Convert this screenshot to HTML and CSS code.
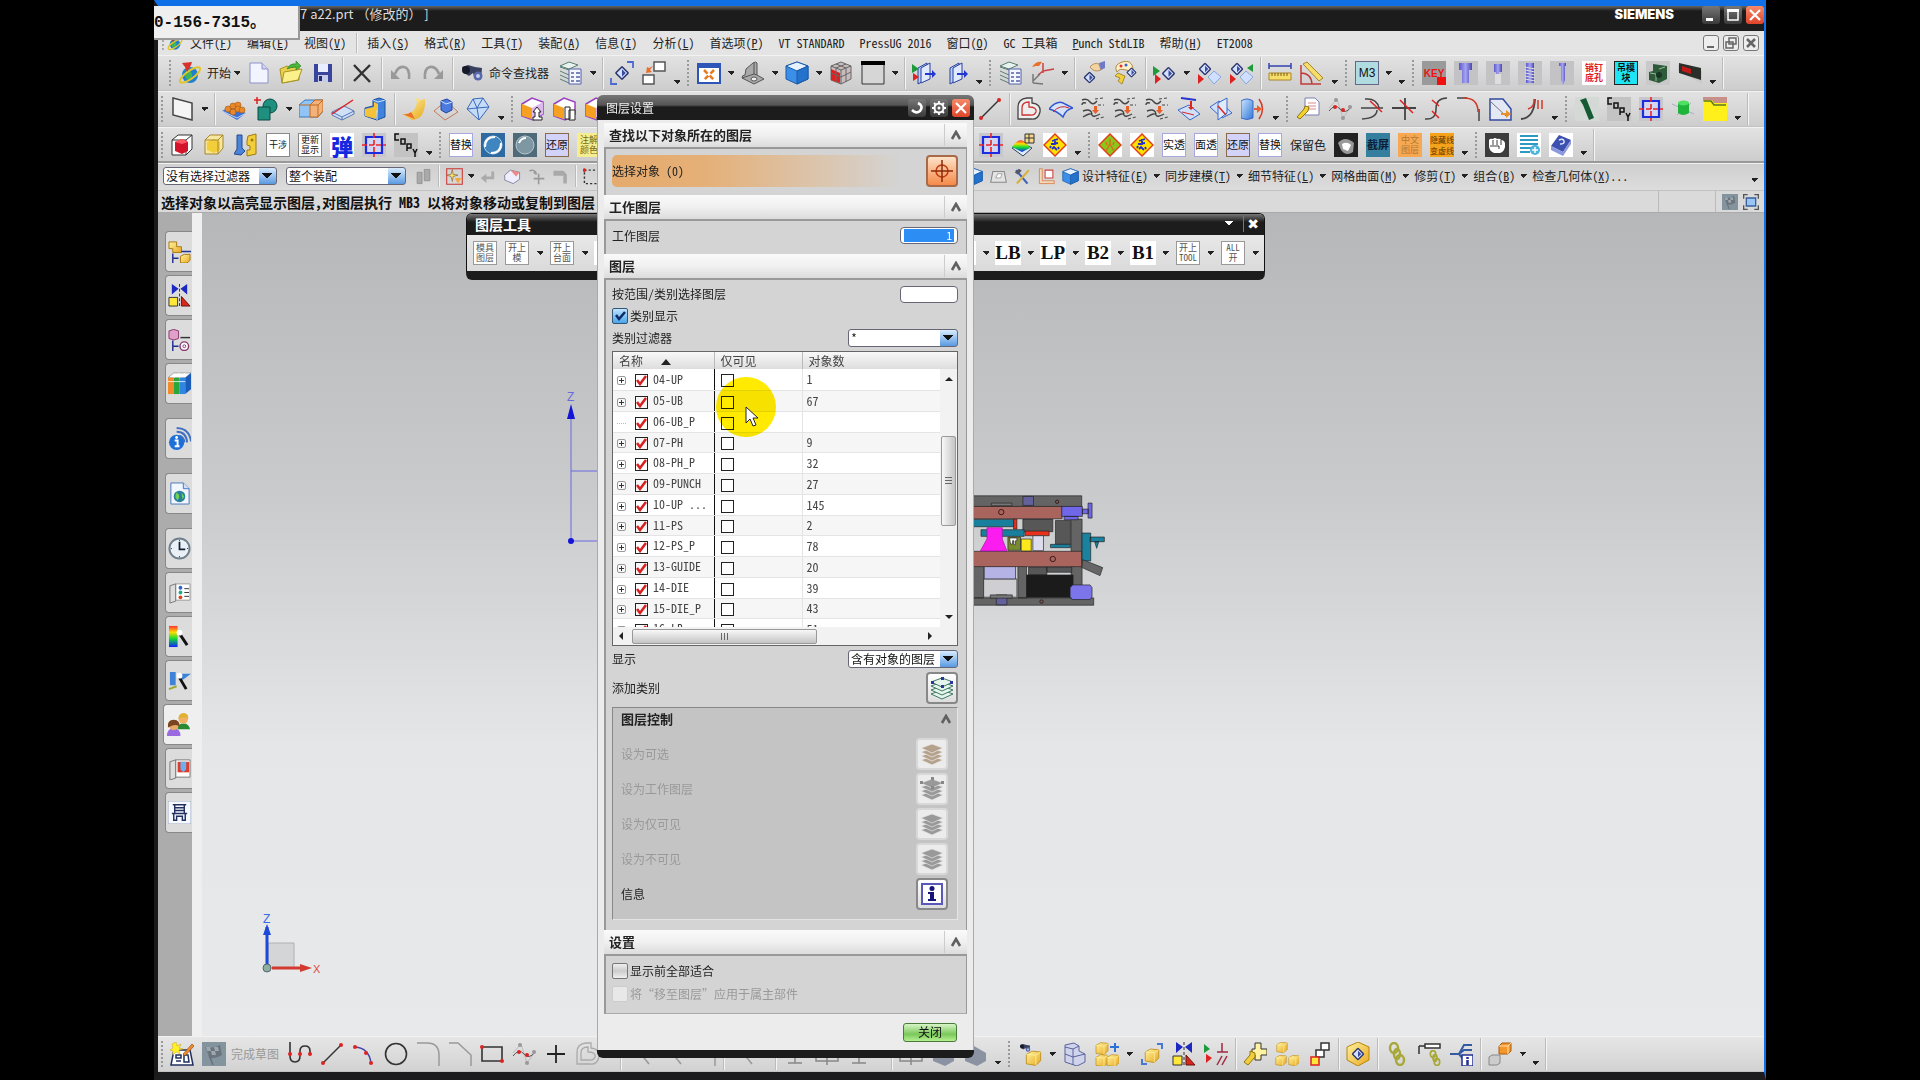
FILE: index.html
```html
<!DOCTYPE html>
<html lang="zh-CN">
<head>
    <meta charset="UTF-8">
    <meta name="viewport" content="width=device-width, initial-scale=1.0">
    <title>图层设置</title>
    <link rel="stylesheet" href="styles.css">
</head>
<body>
    <!-- Icon library -->
    <svg class="library" aria-hidden="true">
        <defs>
            <linearGradient id="g-blue" x1="0" y1="0" x2="1" y2="1"><stop offset="0" stop-color="#cfe6ff"/><stop offset="1" stop-color="#2f77d8"/></linearGradient>
            <linearGradient id="g-gold" x1="0" y1="0" x2="1" y2="1"><stop offset="0" stop-color="#fff3a0"/><stop offset="1" stop-color="#e8a820"/></linearGradient>
            <linearGradient id="g-rain" x1="0" y1="0" x2="0" y2="1"><stop offset="0" stop-color="#f33"/><stop offset=".3" stop-color="#fd0"/><stop offset=".6" stop-color="#1d3"/><stop offset="1" stop-color="#12f"/></linearGradient>
            <linearGradient id="g-violet" x1="0" y1="0" x2="1" y2="0"><stop offset="0" stop-color="#5a58c8"/><stop offset=".5" stop-color="#a5a3f2"/><stop offset="1" stop-color="#4a48b0"/></linearGradient>
        </defs>
        <symbol id="nx" viewBox="0 0 24 24"><circle cx="12" cy="14" r="8" fill="#1f7fd0"/><path d="M8 10q5-1 6 3t-3 7q-6-3-3-10z" fill="#3fb55a"/><ellipse cx="12" cy="14" rx="12" ry="4" fill="none" stroke="#e3c52b" stroke-width="2" transform="rotate(-35 12 14)"/><path d="M4 2l10-1-1 3-4 7-2-5z" fill="#d8322a"/></symbol>
        <symbol id="new" viewBox="0 0 24 24"><path d="M3 2h12l6 6v14H3z" fill="#f2f4ff" stroke="#8f92c8"/><path d="M15 2v6h6" fill="#cfd2f0" stroke="#8f92c8"/></symbol>
        <symbol id="open" viewBox="0 0 24 24"><path d="M1 8l7-3 3 2 9-2v14L3 22z" fill="#e9d24a" stroke="#a8922a"/><path d="M5 11l18-3-4 11L3 22z" fill="#fbf08a" stroke="#a8922a"/><path d="M8 8q3-6 9-5V0l5 5-5 4V6q-5 0-9 2z" fill="#4bb53c" stroke="#2a7a22" stroke-width=".6"/></symbol>
        <symbol id="save" viewBox="0 0 24 24"><path d="M3 3h18v18H3z" fill="#39449c"/><path d="M7 3h10v8H7z" fill="#e8eeff"/><path d="M7 14h10v7H7z" fill="#c6cbe8"/><path d="M8 15h3v5H8z" fill="#222c70"/></symbol>
        <symbol id="del" viewBox="0 0 24 24"><path d="M4 4l16 17M20 4L4 20" stroke="#333" stroke-width="2.4"/></symbol>
        <symbol id="undo" viewBox="0 0 24 24"><path d="M6 13q3-8 9-7t5 12" fill="none" stroke="#999" stroke-width="2.6"/><path d="M2 9v9h9z" fill="#999"/></symbol>
        <symbol id="redo" viewBox="0 0 24 24"><path d="M18 13q-3-8-9-7T4 18" fill="none" stroke="#999" stroke-width="2.6"/><path d="M22 9v9h-9z" fill="#999"/></symbol>
        <symbol id="binoc" viewBox="0 0 24 24"><path d="M2 6l6-2 7 2 7 1-1 11h-6l-2-6-4 3-5-3z" fill="#3a4160"/><circle cx="6" cy="9" r="4" fill="#161a28"/><circle cx="18" cy="15" r="4.500" fill="#5968a8"/><circle cx="18" cy="15" r="2" fill="#c4cdf0"/></symbol>
        <symbol id="list" viewBox="0 0 24 24"><path d="M1 5l9-4 9 3-9 4zM1 10l9 4M1 14l9 4M1 18l9 4M1 6l9 3" fill="#e8f2ee" stroke="#5b7f74"/><path d="M10 8h12v15H10z" fill="#f4f6ff" stroke="#5560a8"/><path d="M12 12h3M17 12h4M12 16h3M17 16h4M12 20h3M17 20h4" stroke="#5560a8" stroke-width="1.500"/></symbol>
        <symbol id="diamond" viewBox="0 0 24 24"><rect x="5" y="5" width="14" height="14" rx="2" transform="rotate(45 12 12)" fill="#27346e"/><path d="M12 5l7 7-7 7-7-7z" fill="#d7e0ff"/><path d="M12 7l5 5-5 5z" fill="#3a4ea0"/></symbol>
        <symbol id="swap" viewBox="0 0 24 24"><use href="#diamond" x="3" y="3" width="18" height="18"/><path d="M17 1h6v6M14 1M1 17v6h6" fill="none" stroke="#4a6ad0" stroke-width="1.800"/></symbol>
        <symbol id="boxes" viewBox="0 0 24 24"><path d="M12 1h11v9H12zM1 14h11v9H1z" fill="#fff" stroke="#555" stroke-width="1.500"/><path d="M4 12l1-6 2 1 4-2-3 4 2 2z" fill="#e8702a"/></symbol>
        <symbol id="fit" viewBox="0 0 24 24"><path d="M1 3h22v19H1z" fill="#fff" stroke="#2d56b8" stroke-width="2"/><path d="M1 3h22v4H1z" fill="#2d56b8"/><path d="M7 9l10 10M17 9L7 19" stroke="#e77a20" stroke-width="2.500" stroke-dasharray="5 3"/></symbol>
        <symbol id="bracket" viewBox="0 0 24 24"><path d="M12 2q3-2 4 0v12l7 4-10 5L1 17q0-3 3-3l1-6z" fill="#a9a9a9" stroke="#555"/><path d="M1 17l12-4 3 1M13 13V2" fill="none" stroke="#555"/><ellipse cx="13" cy="18" rx="3" ry="2" fill="#eee" stroke="#555"/></symbol>
        <symbol id="cube" viewBox="0 0 24 24"><path d="M12 1l11 4v13l-11 5L1 18V5z" fill="#3b8fe8" stroke="#1b5aa8"/><path d="M12 1l11 4-11 5L1 5z" fill="#e6f3ff" stroke="#1b5aa8"/><path d="M12 10l11-5v13l-11 5z" fill="#2472cc" stroke="#1b5aa8"/></symbol>
        <symbol id="redcube" viewBox="0 0 24 24"><path d="M12 1l10 4v13l-10 5-10-4V5z" fill="#c9bcbc" stroke="#666"/><path d="M2 8l9 4v10L2 19z" fill="#e02020"/><path d="M2 5l10 4 10-4M12 9v14M7 3l10 4v14M17 3L7 7v14M2 12l10 4 10-5" fill="none" stroke="#666"/></symbol>
        <symbol id="rect" viewBox="0 0 24 24"><path d="M1 1h22v22H1z" fill="#d6d6d6" stroke="#333"/><path d="M0 0h24v4H0z" fill="#000"/></symbol>
        <symbol id="door" viewBox="0 0 24 24"><path d="M6 7l9-5v16l-9 5z" fill="#b8d0ff" stroke="#2b3f98"/><path d="M9 7l9-5v16l-9 4z" fill="#e0eaff" stroke="#2b3f98"/><path d="M13 12h7V9l4 4-4 4v-3h-7z" fill="#2038d0"/></symbol>
        <symbol id="door2" viewBox="0 0 24 24"><use href="#door"/><path d="M0 3l7 5-7 4z" fill="#1e9a3a"/><path d="M1 12l6 4-6 4z" fill="#d22"/></symbol>
        <symbol id="axes" viewBox="0 0 24 24"><path d="M12 12V2M12 10l11-2M12 10l-5 4" stroke="#c44" stroke-width="1.500"/><path d="M2 22V13M2 22l10 1M2 20l7-7" stroke="#777" fill="none" stroke-width="1.500"/><path d="M1 6q4-6 10-5L8 5H5z" fill="#e8702a"/></symbol>
        <symbol id="hand" viewBox="0 0 24 24"><use href="#diamond" x="0" y="9" width="15" height="15"/><path d="M8 6q4-5 9-3l2 6q-7 3-11-3z" fill="#f3d3a0" stroke="#a07040" stroke-width=".7"/><path d="M17 2l6-2v7l-4 2z" fill="#7078c8"/></symbol>
        <symbol id="palette" viewBox="0 0 24 24"><path d="M3 11Q-1 4 8 1t11 6q0 4-7 2t-9 2z" fill="#fff0c8" stroke="#b08a40"/><circle cx="7" cy="5" r="1.500" fill="#d33"/><circle cx="12" cy="4" r="1.500" fill="#36c"/><use href="#diamond" x="11" y="5" width="13" height="13"/><path d="M4 12l7 3-3 8-4-3 2-3-5-2z" fill="#f0d040" stroke="#907010" stroke-width=".7"/></symbol>
        <symbol id="cmp" viewBox="0 0 24 24"><path d="M0 5l7 5-7 5z" fill="#1e9a3a"/><path d="M2 13l6 5-6 5z" fill="#d22"/><use href="#diamond" x="7" y="4" width="17" height="17"/></symbol>
        <symbol id="cmp2" viewBox="0 0 24 24"><use href="#diamond" x="0" y="0" width="16" height="16"/><path d="M17 10l7 6-7 7-6-7z" fill="#cfdfff" stroke="#8aa8e0"/><path d="M1 13l6 5-6 5z" fill="#d22"/></symbol>
        <symbol id="cmp3" viewBox="0 0 24 24"><use href="#cmp2"/><path d="M24 3l-6 4 6 4z" fill="#1e9a3a"/></symbol>
        <symbol id="ruler" viewBox="0 0 24 24"><path d="M1 5h22M1 2v6M23 2v6" stroke="#3344b0" stroke-width="1.500"/><path d="M1 12h22v7H1z" fill="#f7de6a" stroke="#a8852a"/><path d="M4 12v3M7 12v3M10 12v3M13 12v3M16 12v3M19 12v3" stroke="#7a5d10"/></symbol>
        <symbol id="angle" viewBox="0 0 24 24"><path d="M1 4v19h20M1 12q10 0 11 11" fill="none" stroke="#c23a3a" stroke-width="1.500"/><path d="M3 3l4-2 16 16-4 3z" fill="#f7de6a" stroke="#a8852a"/></symbol>
        <symbol id="screw" viewBox="0 0 24 24"><path d="M0 0h24v24H0z" fill="#c3c3c6"/><path d="M5 2h13v7h-3v13H8V9H5z" fill="url(#g-violet)"/></symbol>
        <symbol id="screw2" viewBox="0 0 24 24"><path d="M0 0h24v24H0z" fill="#c3c3c6"/><path d="M8 3h8v8h-3v2h-3v-2H8z" fill="url(#g-violet)"/><path d="M9 13h6v10H9z" fill="#ddd"/></symbol>
        <symbol id="spring" viewBox="0 0 24 24"><path d="M0 0h24v24H0z" fill="#c3c3c6"/><path d="M8 2h8v20H8z" fill="url(#g-violet)"/><path d="M7 6l10 2M7 9l10 2M7 12l10 2M7 15l10 2M7 18l10 2" stroke="#ddd"/></symbol>
        <symbol id="pin" viewBox="0 0 24 24"><path d="M0 0h24v24H0z" fill="#c3c3c6"/><path d="M9 2h7v3h-1v14l-2 5-2-5V5H9z" fill="url(#g-violet)"/></symbol>
        <symbol id="gblock" viewBox="0 0 24 24"><path d="M0 0h24v24H0z" fill="#c9c9c9"/><path d="M7 3l14 2v13l-8 4-10-3v-8l4-1z" fill="#2f5a3a"/><path d="M4 12l6 1v7M13 8l6-2" stroke="#8fc09a" fill="none"/><circle cx="13" cy="14" r="3" fill="#143520"/></symbol>
        <symbol id="strip" viewBox="0 0 24 24"><path d="M0 4l24 6v13L0 10z" fill="#c9c9c9"/><path d="M1 2l22 5v12L1 12z" fill="#2a2f2a"/><path d="M4 5l9 3v5L4 10z" fill="#c21818"/></symbol>
        <symbol id="plane" viewBox="0 0 24 24"><path d="M3 1l19 5v17L3 18z" fill="#f4f4f4" stroke="#444" stroke-width="1.500"/></symbol>
        <symbol id="bumps" viewBox="0 0 24 24"><path d="M0 14l9-5 15 7-9 7z" fill="#3c6fd0"/><path d="M0 14l15 7 9-5" fill="none" stroke="#bcd3ff"/><g fill="#e8882a" stroke="#a85a10" stroke-width=".6"><circle cx="6" cy="12" r="3"/><circle cx="11" cy="9" r="3"/><circle cx="16" cy="8" r="3"/><circle cx="11" cy="15" r="3"/><circle cx="16" cy="12" r="3"/><circle cx="20" cy="13" r="3"/></g></symbol>
        <symbol id="unite" viewBox="0 0 24 24"><circle cx="16" cy="9" r="7" fill="#1f9080" stroke="#0d4a44"/><path d="M4 10h12v13H4z" fill="#1f9080" stroke="#0d4a44"/><path d="M3 0v7M0 3h7" stroke="#d22" stroke-width="1.500"/></symbol>
        <symbol id="block" viewBox="0 0 24 24"><path d="M0 8l6-5h18v11l-5 6H0z" fill="#8fc4f5" stroke="#3b78c0"/><path d="M11 8l5-5h8v11l-5 6h-8z" fill="#f2b27a" stroke="#c06a20"/><path d="M0 8h19v12M19 8l5-5" fill="none" stroke="#c06a20"/></symbol>
        <symbol id="slab" viewBox="0 0 24 24"><path d="M1 15l12-6 10 5v3l-12 6-10-5z" fill="#cfe0f8" stroke="#5577b0"/><path d="M1 15l10 5 12-6M11 20v3" fill="none" stroke="#5577b0"/><path d="M1 17L22 3" stroke="#d22" stroke-width="1.500"/></symbol>
        <symbol id="extr" viewBox="0 0 24 24"><path d="M10 3l6-2 6 2v17l-8 3-12-4v-8l8-2z" fill="#3f83dc" stroke="#1d4f9c"/><path d="M2 12l9-2V5l4 2v6l-2 9-11-3z" fill="#f5c23a"/><path d="M10 3l5 2 7-2M14 13v10" fill="none" stroke="#cfe3ff"/></symbol>
        <symbol id="sheet" viewBox="0 0 24 24"><path d="M0 17q14 1 15-13l8-2q1 20-13 21z" fill="url(#g-gold)"/><path d="M0 17q6 1 9-2l4 7z" fill="#e8702a"/><path d="M13 2l5-1-1 5z" fill="#f8e07a"/></symbol>
        <symbol id="pyramid" viewBox="0 0 24 24"><path d="M12 4l12 11-13 8L0 14z" fill="none" stroke="#c27a5a"/><path d="M7 4l6-2 5 3v8l-6 3-5-3z" fill="#4b7be0" stroke="#23469c"/><path d="M7 4l5 3 6-2" fill="none" stroke="#cfe0ff"/></symbol>
        <symbol id="gem" viewBox="0 0 24 24"><path d="M7 2l10-1 6 9-10 13L1 12z" fill="#c4dcfa" stroke="#3a68b8"/><path d="M7 2l4 9 6-10M1 12l10-1 12-1M11 11l2 12" fill="none" stroke="#3a68b8"/></symbol>
        <symbol id="pcube" viewBox="0 0 24 24"><path d="M1 7l10-6 11 4v12l-10 6-11-4z" fill="#fff" stroke="#9a3fc0" stroke-width="1.500"/><path d="M1 7l10 4v11L1 19z" fill="#f5a020"/><path d="M11 11l11-6v12l-11 6z" fill="#dcb8ee"/><path d="M16 10l4 5h-2v5h3v3H12v-3h2v-5h-2z" fill="#fff" stroke="#222"/></symbol>
        <symbol id="pcube2" viewBox="0 0 24 24"><path d="M1 7l10-6 11 4v12l-10 6-11-4z" fill="#fff" stroke="#9a3fc0" stroke-width="1.500"/><path d="M1 7l10 4v11L1 19z" fill="#f5a020"/><path d="M12 10h5v12h-5zM16 13h6v10h-6z" fill="#fff" stroke="#222"/></symbol>
        <symbol id="line" viewBox="0 0 24 24"><path d="M3 21L21 3" stroke="#333" stroke-width="1.500"/><circle cx="3" cy="21" r="2" fill="#d22"/><circle cx="21" cy="3" r="2" fill="#d22"/></symbol>
        <symbol id="offset" viewBox="0 0 24 24"><path d="M1 10q0-8 9-9h5v5q9 1 8 9-2 8-9 7H1z" fill="#eee" stroke="#444" stroke-width="1.300"/><path d="M5 11q0-6 7-6v5q8 0 7 5-2 4-6 3H5z" fill="none" stroke="#c33" stroke-width="1.300"/></symbol>
        <symbol id="surf" viewBox="0 0 24 24"><path d="M0 12q9-10 16-5l8 4q-7 1-10 9-6-6-14-8z" fill="#d3e3fa" stroke="#2f55d0" stroke-width="1.500"/><path d="M4 15q7-8 16-4" fill="none" stroke="#d22"/></symbol>
        <symbol id="bridge" viewBox="0 0 24 24"><path d="M1 3q5-2 8 2t7-1M1 8q0-3 4-2M2 20q8-5 9-2t8-1M2 14q8-3 9 3" fill="none" stroke="#444" stroke-width="1.400"/><path d="M14 2l8-1M17 8h6M15 22l8-2" stroke="#444" stroke-dasharray="3 2"/><path d="M13 9h3v4h2l-3.500 4-3.500-4h2z" fill="#e8602a"/></symbol>
        <symbol id="proj" viewBox="0 0 24 24"><path d="M1 13l11-5 11 9-10 6z" fill="#cfe0f8" stroke="#3a68c8"/><path d="M4 1l15 2" stroke="#2a35d0" stroke-width="2"/><path d="M5 15l12 3" stroke="#d22"/><path d="M13 4v6h-2l3 3 3-3h-2V4z" fill="#d22"/></symbol>
        <symbol id="isect" viewBox="0 0 24 24"><path d="M1 10l9-6 13 12-10 5z" fill="#cfe0f8" stroke="#3a68c8"/><path d="M9 6l9-5v15l-9 7z" fill="#dfeafa" stroke="#3a68c8"/><path d="M9 9l8 9" stroke="#d22" stroke-width="1.500"/></symbol>
        <symbol id="cyl" viewBox="0 0 24 24"><path d="M0 4q6-4 12 0v17q-6 3-12 0z" fill="url(#g-blue)" stroke="#3a68c8"/><path d="M13 12h5M18 2q7 10 0 20" fill="none" stroke="#d43a2a" stroke-width="1.500"/><path d="M16 8l5 4-5 4z" fill="#e8602a"/></symbol>
        <symbol id="note" viewBox="0 0 24 24"><path d="M9 1h10l4 4v13H9z" fill="#fff" stroke="#7a80b0"/><path d="M12 6h8M12 9h8M12 12h8" stroke="#d88"/><path d="M1 20l7-8 1-3 4 1-1 4-8 8z" fill="#f2d22e" stroke="#8f7410"/></symbol>
        <symbol id="spline" viewBox="0 0 24 24"><path d="M1 11L9 2l6 19 8-11" fill="none" stroke="#bbb"/><path d="M1 14q6-8 11-2t11-2" fill="none" stroke="#555"/><g fill="#999"><circle cx="8" cy="3" r="2"/><circle cx="15" cy="21" r="2"/><circle cx="22" cy="10" r="2"/></g><circle cx="7" cy="10" r="2" fill="#d22"/><circle cx="15" cy="13" r="2" fill="#d22"/></symbol>
        <symbol id="trim" viewBox="0 0 24 24"><path d="M1 11h22M5 2q12-1 14 9M2 22q15-1 15-9" fill="none" stroke="#444" stroke-width="1.500"/><path d="M10 4l12 11" stroke="#d22" stroke-width="1.500"/></symbol>
        <symbol id="trimx" viewBox="0 0 24 24"><path d="M0 11h24M13 1v22" stroke="#444" stroke-width="1.800"/><path d="M8 3l13 13" stroke="#d22" stroke-width="1.500"/></symbol>
        <symbol id="scurve" viewBox="0 0 24 24"><path d="M1 22q11 1 11-10T23 1" fill="none" stroke="#444" stroke-width="1.500"/><path d="M8 3l7 6M8 14l7 7" stroke="#d22" stroke-width="1.500"/></symbol>
        <symbol id="fillet" viewBox="0 0 24 24"><path d="M1 1h10M23 12v12" stroke="#444" stroke-width="1.500"/><path d="M8 1q14 0 14 14" fill="none" stroke="#d43a2a" stroke-width="1.500"/></symbol>
        <symbol id="poly" viewBox="0 0 24 24"><path d="M2 2h13l8 10v11H2z" fill="#e4e8f4" stroke="#334aa0" stroke-width="1.500"/><path d="M2 4l17 16" stroke="#777"/><path d="M13 16h5v-3l5 4-5 4v-3h-5z" fill="#e8902a"/></symbol>
        <symbol id="arc" viewBox="0 0 24 24"><path d="M1 22q13-1 14-20" fill="none" stroke="#444" stroke-width="1.800"/><path d="M8 12q7-2 6-10M18 3v9M22 3v9" fill="none" stroke="#d43a2a" stroke-width="1.500"/></symbol>
        <symbol id="gbolt" viewBox="0 0 24 24"><path d="M0 0h24v24H0z" fill="#d5d9d5"/><path d="M5 3l6-2 2 5 6 15-5 2L8 8z" fill="#145a34"/></symbol>
        <symbol id="copy" viewBox="0 0 24 24"><path d="M0 0h24v24H0z" fill="#c3c3c3"/><path d="M5 1H1v6h4M7 6h4v5H7zM13 18v-7h4v4h-4M19 16l2 4 2-4M21 20v4" fill="none" stroke="#111" stroke-width="1.500"/></symbol>
        <symbol id="target" viewBox="0 0 24 24"><path d="M0 0h24v24H0z" fill="#c8c8cc"/><path d="M4 4h16v16H4z" fill="#d3d6f2" stroke="#1c2de0" stroke-width="2.200"/><path d="M12 0v24M0 12h24" stroke="#e22" stroke-width="1.600" stroke-dasharray="5 2"/></symbol>
        <symbol id="gcyl" viewBox="0 0 24 24"><path d="M1 7l22 10M20 6L6 18" stroke="#aac"/><path d="M7 6q5-4 11 0v10q-6 4-11 0z" fill="#1fb53a"/><ellipse cx="12.500" cy="6" rx="5.500" ry="2.500" fill="#4ee063"/></symbol>
        <symbol id="folder" viewBox="0 0 24 24"><path d="M0 0h24v6H0z" fill="#c9908a"/><path d="M0 5l2-2h7l2 3h13v18H0z" fill="#fff01c"/><path d="M1 4h7l3 4h12" fill="none" stroke="#5a7a20" stroke-width="1.500"/></symbol>
        <symbol id="redbox" viewBox="0 0 24 24"><path d="M2 7l6-5h14v14l-6 6H2z" fill="#fff" stroke="#333"/><path d="M2 7h14v15M16 7l6-5" fill="none" stroke="#333"/><path d="M5 9l7-3 6 3v9l-6 3-7-3z" fill="#d4142a"/><path d="M5 9l7 2 6-2-6-3z" fill="#ff5a64"/></symbol>
        <symbol id="ybox" viewBox="0 0 24 24"><path d="M3 7l5-5h13v13l-5 6H3z" fill="#f6e7a0" stroke="#a8842a"/><path d="M5 9l7-3 6 3v8l-6 3-7-3z" fill="#f2cf3a"/><path d="M3 7h13v14M16 7l5-5" fill="none" stroke="#a8842a"/></symbol>
        <symbol id="jig" viewBox="0 0 24 24"><path d="M3 2h5v13l3 3-4 4-7-1 3-5z" fill="#4b83d8" stroke="#234a90"/><path d="M14 3l8-2v20l-9 2v-6h3v-4l-3-1V8z" fill="#f2cf3a" stroke="#a07a10"/><circle cx="18" cy="7" r="1.500" fill="#a07a10"/></symbol>
        <symbol id="ball" viewBox="0 0 24 24"><path d="M0 0h24v24H0z" fill="#2e6aa0"/><circle cx="12" cy="12" r="9" fill="#3f86c0" stroke="#b9d8f0"/><path d="M4 14Q4 4 14 4M20 10q0 10-10 10" stroke="#fff" stroke-width="2" fill="none"/></symbol>
        <symbol id="ball2" viewBox="0 0 24 24"><path d="M0 0h24v24H0z" fill="#4f6a78"/><circle cx="12" cy="12" r="9" fill="#7d97a3" stroke="#b9c9d0"/><path d="M6 10q2-5 7-5" stroke="#fff" stroke-width="2" fill="none"/></symbol>
        <symbol id="rainbow" viewBox="0 0 24 24"><path d="M1 15l10-5 10 5-9 8z" fill="#dfeaff" stroke="#345"/><path d="M1 14q9-14 18 1l-8 4z" fill="url(#g-rain)"/><path d="M14 1h9v9h-9zM14 5h9M18 1v9" fill="#f6d88a" stroke="#333"/></symbol>
        <symbol id="sign" viewBox="0 0 24 24"><path d="M0 0h24v24H0z" fill="#fff"/><path d="M12 1l11 11-11 11L1 12z" fill="#ffe100" stroke="#e0401a" stroke-width="1.500"/><path d="M9 8l6-2M8 11l7-1M12 6v6M9 16l2-2 3 3M15 14l1 2M8 13l-1 2" stroke="#2330c8" stroke-width="1.800" fill="none"/></symbol>
        <symbol id="fire" viewBox="0 0 24 24"><path d="M0 0h24v24H0z" fill="#fff"/><path d="M12 1l11 11-11 11L1 12z" fill="#8ac61c" stroke="#e0401a" stroke-width="1.500"/><path d="M12 6v5l-4 7M12 11l4 7M8 9l1 3M16 9l-1 3" stroke="#d8701a" stroke-width="1.500" fill="none"/></symbol>
        <symbol id="photo" viewBox="0 0 24 24"><path d="M0 0h24v24H0z" fill="#222"/><path d="M4 10q7-8 16 0l-1 9q-7 5-12-2z" fill="#999"/><path d="M8 11q5-3 9 1l-3 6-5-2z" fill="#fff"/></symbol>
        <symbol id="fist" viewBox="0 0 24 24"><path d="M0 0h24v24H0z" fill="#3c3c3c"/><path d="M4 7q1-2 4-1 2-2 4 0 3-1 4 1 3 0 4 3v4q-1 5-5 6H9q-5-2-5-7z" fill="#fff"/><path d="M8 7v5M12 7v5M16 7v5M5 13h9v3" stroke="#3c3c3c" fill="none"/></symbol>
        <symbol id="doc" viewBox="0 0 24 24"><path d="M0 0h24v24H0z" fill="#fff"/><path d="M3 3h18M3 7h18M3 11h18M3 15h11M3 19h10" stroke="#2f9ac0" stroke-width="2"/><circle cx="18" cy="17" r="5" fill="#4bb4dc"/><path d="M18 14v6M15 17h6" stroke="#fff" stroke-width="1.500"/></symbol>
        <symbol id="book" viewBox="0 0 24 24"><path d="M0 0h24v24H0z" fill="#fff"/><path d="M10 2l12 5-8 12L2 13z" fill="#3c50b0"/><path d="M2 13l12 6v4L2 17zM14 19l8-12v4l-8 12z" fill="#8b98dc"/><path d="M10 7q4-2 5 1t-4 3" stroke="#dfe5ff" fill="none" stroke-width="1.500"/></symbol>
        <symbol id="asm" viewBox="0 0 24 24"><path d="M1 2h8v5h5v6H5V9H1z" fill="url(#g-gold)" stroke="#a87810"/><path d="M5 14v10M5 19h6M14 12h10" stroke="#223090" stroke-width="1.500"/><path d="M13 17l4-2h6v6l-3 3h-7z" fill="url(#g-gold)" stroke="#a87810"/></symbol>
        <symbol id="mirror" viewBox="0 0 24 24"><path d="M4 0l7 5-7 6zM20 0l-7 5 7 6z" fill="#1c28c0"/><path d="M12 0v24" stroke="#333" stroke-dasharray="3 2"/><path d="M1 14h9v9H1z" fill="#ffe83a" stroke="#333"/><path d="M14 13v10h9z" fill="#d8281c" stroke="#611"/></symbol>
        <symbol id="part" viewBox="0 0 24 24"><path d="M1 3q5-3 10 0v8q-5 3-10 0z" fill="#e0a0c8" stroke="#8a3a70"/><path d="M13 10h10" stroke="#333" stroke-width="1.500"/><path d="M5 13v11M5 19h6" stroke="#223090" stroke-width="1.500"/><circle cx="17" cy="19" r="4.500" fill="#fff" stroke="#8a3a70" stroke-width="1.500"/><circle cx="17" cy="19" r="1.500" fill="none" stroke="#8a3a70"/></symbol>
        <symbol id="books" viewBox="0 0 24 24"><path d="M0 6l6-5h18l-6 5z" fill="#fff" stroke="#777" stroke-width=".6"/><path d="M0 6h6v17H0z" fill="#f08a2a"/><path d="M6 6h6v17H6z" fill="#28a83a"/><path d="M12 6h6v17h-6z" fill="#2f86e0"/><path d="M18 6l6-5v17l-6 5z" fill="#1b5cb8"/><path d="M0 10h18M6 6l6-5M12 6l6-5" stroke="#fff" stroke-width=".8"/></symbol>
        <symbol id="info" viewBox="0 0 24 24"><circle cx="9" cy="16" r="8" fill="#1f6fd8"/><path d="M7 14h3v6h2H7" stroke="#fff" stroke-width="2" fill="none"/><circle cx="9" cy="11" r="1.500" fill="#fff"/><path d="M9 5q10 0 11 11M9 1q13 0 15 14M12 9q5 2 5 7" fill="none" stroke="#3f6fc0" stroke-width="2"/></symbol>
        <symbol id="web" viewBox="0 0 24 24"><path d="M3 1h13l6 6v16H3z" fill="#f2f6ff" stroke="#4a78b8"/><path d="M16 1v6h6" fill="#cfe0f8" stroke="#4a78b8"/><circle cx="12" cy="15" r="6" fill="#2a7f9a"/><path d="M9 11q5 3 1 8-4-3-1-8zM14 11l3 4-2 3z" fill="#6fd05a"/></symbol>
        <symbol id="clock" viewBox="0 0 24 24"><circle cx="12" cy="12" r="10.500" fill="#e9f0f6" stroke="#6f7f8c" stroke-width="2"/><path d="M12 5v8h6" fill="none" stroke="#123" stroke-width="1.800"/><path d="M12 3v1M12 20v1M3 12h1M20 12h1" stroke="#123"/></symbol>
        <symbol id="pal" viewBox="0 0 24 24"><path d="M8 3h15v17H8z" fill="#fff" stroke="#999"/><path d="M2 5l6-2v18l-6 2z" fill="#ddd" stroke="#777"/><circle cx="13" cy="7" r="2" fill="#36c"/><circle cx="13" cy="12" r="2" fill="#2a8"/><circle cx="13" cy="17" r="2" fill="#d42"/><path d="M17 8h5M17 12h5M17 16h5" stroke="#333"/></symbol>
        <symbol id="spectrum" viewBox="0 0 24 24"><path d="M1 1h9v22H1z" fill="url(#g-rain)"/><path d="M12 9l8 12" stroke="#111" stroke-width="3"/><circle cx="12" cy="8" r="3" fill="#fff"/></symbol>
        <symbol id="process" viewBox="0 0 24 24"><path d="M2 3h6v14H2zM12 5h12l-8 6h-4z" fill="#3f83d8"/><path d="M1 21l8-3" stroke="#9a3" stroke-width="2"/><path d="M12 9l7 12" stroke="#111" stroke-width="3"/><circle cx="12" cy="7" r="3" fill="#fff"/></symbol>
        <symbol id="people" viewBox="0 0 24 24"><path d="M11 17q0-6 6-6t7 6z" fill="#2a8a32"/><circle cx="17" cy="6" r="5" fill="#f0b060"/><path d="M12 6q0-6 6-6 5 1 4 6-2-3-10 0z" fill="#e0b030"/><path d="M0 24q0-8 7-8t7 8z" fill="#9a6ae0"/><circle cx="7" cy="13" r="5" fill="#e8a868"/><path d="M1 15q-1-8 6-8t6 8q-2-5-12 0z" fill="#7a4420"/></symbol>
        <symbol id="role" viewBox="0 0 24 24"><path d="M8 3h15v18H8z" fill="#fff" stroke="#777"/><path d="M2 5l6-2v19l-6 2z" fill="#ddd" stroke="#777"/><path d="M10 5h12v11H10z" fill="#e03a2a"/><path d="M13 5h6v8l-3 3-3-3z" fill="#6ab0f0"/></symbol>
        <symbol id="press" viewBox="0 0 24 24"><path d="M0 0h24v24H0z" fill="#f6f8ff" stroke="#9ab"/><path d="M5 4h14M7 7h10M7 10h10M4 13h16M7 4v9M17 4v9M6 13v7h3v-4h6v4h3v-7" fill="none" stroke="#223060" stroke-width="1.500"/></symbol>
        <symbol id="sketch" viewBox="0 0 24 24"><path d="M4 8h16l3 15H1z" fill="#fff" stroke="#223060" stroke-width="1.500"/><path d="M6 13h5v3H6zM6 19h5M14 13h4l1 7h-5z" fill="none" stroke="#223060" stroke-width="1.500"/><path d="M13 12l9-10 2 2-9 10z" fill="#f08a2a" stroke="#7a4410" stroke-width=".6"/><path d="M6 0l1 4 4-2-2 4 4 1-4 1 1 4-4-2-3 3V9L0 8l3-2-1-4z" fill="#fff02a" stroke="#c8a010" stroke-width=".5"/></symbol>
        <symbol id="flag" viewBox="0 0 24 24"><path d="M0 0h24v24H0z" fill="#84949e"/><path d="M3 5q8 2 15-2l2 10q-6 4-12 3z" fill="#6b747c"/><path d="M4 5h4l1 4H5zM12 5h4l1 4h-4zM9 9h4l1 4h-4z" fill="#9ca7af"/><path d="M7 13l4 10" stroke="#66707a" stroke-width="1.500"/></symbol>
        <symbol id="profile" viewBox="0 0 24 24"><path d="M2 0v14q0 6 5 6t5-6V9q0-5 5-5t5 5v4" fill="none" stroke="#333" stroke-width="1.600"/><circle cx="2" cy="12" r="2" fill="#d22"/><circle cx="12" cy="12" r="2" fill="#d22"/><circle cx="22" cy="12" r="2" fill="#d22"/></symbol>
        <symbol id="arc3" viewBox="0 0 24 24"><path d="M3 5q14 1 16 16" fill="none" stroke="#44a" stroke-width="1.500"/><circle cx="3" cy="5" r="2" fill="#d22"/><circle cx="14" cy="11" r="2" fill="#d22"/><circle cx="19" cy="21" r="2" fill="#d22"/></symbol>
        <symbol id="circle" viewBox="0 0 24 24"><circle cx="12" cy="12" r="10.500" fill="none" stroke="#333" stroke-width="1.600"/></symbol>
        <symbol id="gfillet" viewBox="0 0 24 24"><path d="M1 1h10q12 0 12 12v11" fill="none" stroke="#999" stroke-width="1.500"/></symbol>
        <symbol id="chamfer" viewBox="0 0 24 24"><path d="M1 1h9l13 12v11" fill="none" stroke="#999" stroke-width="1.500"/></symbol>
        <symbol id="rect2" viewBox="0 0 24 24"><path d="M2 5h20v14H2z" fill="none" stroke="#333" stroke-width="1.600"/><circle cx="2" cy="5" r="2" fill="#d22"/><circle cx="22" cy="19" r="2" fill="#d22"/></symbol>
        <symbol id="plus" viewBox="0 0 24 24"><path d="M12 3v18M3 12h18" stroke="#222" stroke-width="1.800"/></symbol>
        <symbol id="goff" viewBox="0 0 24 24"><path d="M1 10q0-8 9-9h5v5q9 1 8 9-2 8-9 7H1zM5 11q0-6 7-6v5q8 0 7 5-2 4-6 3H5z" fill="none" stroke="#aaa" stroke-width="1.300"/></symbol>
        <symbol id="gcurve" viewBox="0 0 24 24"><path d="M1 8q12 2 20 14" fill="none" stroke="#999" stroke-width="1.500"/></symbol>
        <symbol id="gdim" viewBox="0 0 24 24"><path d="M1 10h22v9H1zM12 3v20" fill="none" stroke="#888" stroke-width="1.500"/></symbol>
        <symbol id="gperp" viewBox="0 0 24 24"><path d="M12 3v18M5 21h14" fill="none" stroke="#888" stroke-width="1.500"/></symbol>
        <symbol id="gbox" viewBox="0 0 24 24"><path d="M2 10l9-6 12 7v8l-9 5-12-5z" fill="#8b93a3"/></symbol>
        <symbol id="yc" viewBox="0 0 24 24"><path d="M3 8l7-4 11 1v11l-6 6-12-2z" fill="url(#g-gold)" stroke="#b8860e"/><path d="M3 8l12 1 6-4M15 9v13" fill="none" stroke="#fff3a0"/></symbol>
        <symbol id="yfind" viewBox="0 0 24 24"><use href="#yc" x="6" y="6" width="19" height="19"/><use href="#binoc" x="0" y="0" width="14" height="12"/></symbol>
        <symbol id="wave" viewBox="0 0 24 24"><path d="M2 3l9-2 5 3v5l6 3v8l-8 4-12-4z" fill="#cfd4ea" stroke="#5a62a0"/><path d="M2 12l8 3 12-3M10 15V7l6-3M2 5l8 2M10 15v8" fill="none" stroke="#5a62a0"/></symbol>
        <symbol id="yadd" viewBox="0 0 24 24"><use href="#yc" x="-1" y="-2" width="16" height="16"/><use href="#yc" x="-1" y="10" width="16" height="16"/><use href="#yc" x="10" y="10" width="16" height="16"/><path d="M20 1v9M15 5h9" stroke="#2f6fd8" stroke-width="2"/></symbol>
        <symbol id="ymove" viewBox="0 0 24 24"><use href="#yc" x="3" y="4" width="18" height="18"/><path d="M17 2h5v5M2 17v5h5" fill="none" stroke="#4a78d0" stroke-width="2"/></symbol>
        <symbol id="constr" viewBox="0 0 24 24"><path d="M0 2l6 5-6 4z" fill="#1e9a3a"/><path d="M2 12l6 4-6 5z" fill="#d22"/><path d="M18 1v9M13 10h11M13 23l5-9M18 23l5-9" stroke="#a02840" stroke-width="1.500"/></symbol>
        <symbol id="wrench" viewBox="0 0 24 24"><path d="M12 1h6v6h6v6h-6v5h-6v-5H9V7h3z" fill="#fff2a0" stroke="#333"/><path d="M1 20l6-7 0-4 5 2 0 4-7 8z" fill="#f2cf3a" stroke="#8f7410"/></symbol>
        <symbol id="y3" viewBox="0 0 24 24"><use href="#yc" x="0" y="-2" width="14" height="14"/><use href="#yc" x="-1" y="11" width="14" height="14"/><use href="#yc" x="12" y="11" width="14" height="14"/></symbol>
        <symbol id="repl" viewBox="0 0 24 24"><path d="M14 1h8v7h-8zM9 8h8v7H9z" fill="#fff" stroke="#333" stroke-width="1.500"/><path d="M4 15h8v8H4z" fill="#ffe83a" stroke="#d22" stroke-width="1.500"/></symbol>
        <symbol id="hexd" viewBox="0 0 24 24"><path d="M12 0l11 5v13l-11 6L1 18V5z" fill="url(#g-gold)" stroke="#b8860e"/><use href="#diamond" x="4" y="4" width="16" height="16"/></symbol>
        <symbol id="chain" viewBox="0 0 24 24"><g fill="none" stroke="#a8a83a" stroke-width="2.500"><ellipse cx="9" cy="6" rx="4" ry="5"/><ellipse cx="12" cy="12" rx="3" ry="5"/><ellipse cx="15" cy="18" rx="4" ry="5"/></g></symbol>
        <symbol id="chain2" viewBox="0 0 24 24"><path d="M8 2h15v4H8zM2 4h6M2 4v8" fill="#fff" stroke="#333" stroke-width="1.500"/><use href="#chain" x="10" y="8" width="16" height="16"/></symbol>
        <symbol id="tree" viewBox="0 0 24 24"><path d="M1 12h9M10 12l5-9h8M10 12l5-4h8M10 12l5 6" fill="none" stroke="#345aa0" stroke-width="2"/><path d="M13 13h11v11H13z" fill="#fff" stroke="#223090" stroke-width="1.500"/><path d="M18.500 15v2M18.500 18v5" stroke="#223090" stroke-width="2.500"/></symbol>
        <symbol id="seq" viewBox="0 0 24 24"><path d="M11 4l3-3h9v8l-3 3h-9z" fill="#f5962a" stroke="#a85a10"/><path d="M11 4h9v8M20 4l3-3" fill="none" stroke="#ffe0b0"/><path d="M1 15l3-2h8v8l-3 2H1z" fill="#ccc" stroke="#888"/></symbol>
        <symbol id="star" viewBox="0 0 24 24"><path d="M1 1h22v22H1z" fill="none" stroke="#c33" stroke-width="1.500"/><path d="M9 2l1 7 7 1-7 2-1 7-2-7-6-2 6-1z" fill="#f8e46a" stroke="#864"/><path d="M12 14h10l-5 8z" fill="#f2a93a"/></symbol>
        <symbol id="back" viewBox="0 0 24 24"><path d="M16 5h4v11H9v5l-8-7 8-6v4h7z" fill="#aaa"/></symbol>
        <symbol id="house" viewBox="0 0 24 24"><path d="M1 10l8-7 13 3v10l-9 6L1 17z" fill="#eef" stroke="#668"/><path d="M9 3l13 3-5 6z" fill="#e88"/></symbol>
        <symbol id="rot" viewBox="0 0 24 24"><path d="M2 4q8-3 10 5M15 8v15M8 15h15M12 9L8 6" fill="none" stroke="#999" stroke-width="2.200"/></symbol>
        <symbol id="hammer" viewBox="0 0 24 24"><path d="M2 4h14l5 5v13h-5V11H2z" fill="#a9a9a9"/></symbol>
        <symbol id="dash" viewBox="0 0 24 24"><path d="M2 3h20v19H2z" fill="none" stroke="#333" stroke-width="2" stroke-dasharray="3 3"/><circle cx="2" cy="3" r="2.500" fill="#d22"/><circle cx="22" cy="22" r="2.500" fill="#d22"/></symbol>
        <symbol id="sheet2" viewBox="0 0 24 24"><path d="M4 5h16l3 15H1z" fill="#e3e3e3" stroke="#888" stroke-width="1.500"/><path d="M8 14l3-6h6l-2 6z" fill="#fff" stroke="#888"/></symbol>
        <symbol id="tools" viewBox="0 0 24 24"><path d="M3 3l16 19" stroke="#3f62b8" stroke-width="3"/><path d="M21 3L4 22" stroke="#d8b03a" stroke-width="3"/><path d="M1 6l6-5 4 3-6 5z" fill="#556"/></symbol>
        <symbol id="corner" viewBox="0 0 24 24"><path d="M2 1h4v17h17v4H2z" fill="#f5d8b8" stroke="#d0703a"/><path d="M10 3h11v11H10z" fill="#fff" stroke="#d0403a" stroke-width="1.500"/></symbol>
        <symbol id="pencils" viewBox="0 0 24 24"><path d="M3 6h7v16H3zM13 2h8v16h-8z" fill="#a9a9a9" stroke="#888"/></symbol>
        <symbol id="stack" viewBox="0 0 24 24"><g fill="#999" stroke="#e4e4e4" stroke-width=".7"><path d="M1 18l11-4 11 4-11 5z"/><path d="M1 14l11-4 11 4-11 5z"/><path d="M1 10l11-4 11 4-11 5z"/><path d="M1 6l11-4 11 4-11 5z"/></g></symbol>
        <symbol id="stack-tan" viewBox="0 0 24 24"><g fill="#b5a28c" stroke="#eee" stroke-width=".7"><path d="M1 18l11-4 11 4-11 5z"/><path d="M1 14l11-4 11 4-11 5z"/><path d="M1 10l11-4 11 4-11 5z"/><path d="M1 6l11-4 11 4-11 5z"/></g></symbol>
        <symbol id="stack-pts" viewBox="0 0 24 24"><use href="#stack"/><path d="M0 4h3v3H0zM21 4h3v3h-3zM11 0h3v3h-3zM11 9h3v3h-3z" fill="#888"/></symbol>
        <symbol id="stack-add" viewBox="0 0 24 24"><g fill="#e4f4ec" stroke="#3f7a62"><path d="M1 18l11-4 11 4-11 5z"/><path d="M1 14l11-4 11 4-11 5z"/><path d="M1 10l11-4 11 4-11 5z"/><path d="M1 6l11-4 11 4-11 5z"/></g><path d="M1 5h3v3H1zM20 5h3v3h-3zM11 1h3v3h-3zM11 9h3v3h-3z" fill="#2a35a0"/></symbol>
    </svg>

    <div class="app">
        <header class="titlebar">
            <span class="doc-title">7 a22.prt （修改的） ]</span>
            <span class="brand">SIEMENS</span>
            <button class="win" title="最小化"><svg viewBox="0 0 18 18"><path d="M4 12h7v3H4z" fill="#fff"/></svg></button>
            <button class="win" title="最大化"><svg viewBox="0 0 18 18"><path d="M4 4h10v10H4z" fill="none" stroke="#fff" stroke-width="1.500"/><path d="M3 3h12v3H3z" fill="#fff"/></svg></button>
            <button class="win win-close" title="退出"><svg viewBox="0 0 18 18"><path d="M4 4l10 10M14 4L4 14" stroke="#fff" stroke-width="2.200"/></svg></button>
        </header>
        <div class="caption">0-156-7315。</div>

        <nav class="menubar">
            <i class="dots"></i><svg class="menu-logo"><use href="#nx"/></svg>
            <a href="#">文件(<u>F</u>)</a><a href="#">编辑(<u>E</u>)</a><a href="#">视图(<u>V</u>)</a><i class="sep"></i>
            <a href="#">插入(<u>S</u>)</a><a href="#">格式(<u>R</u>)</a><a href="#">工具(<u>T</u>)</a><a href="#">装配(<u>A</u>)</a>
            <a href="#">信息(<u>I</u>)</a><a href="#">分析(<u>L</u>)</a><a href="#">首选项(<u>P</u>)</a><a href="#">VT STANDARD</a>
            <a href="#">PressUG 2016</a><a href="#">窗口(<u>O</u>)</a><a href="#">GC 工具箱</a><a href="#"><u>P</u>unch StdLIB</a>
            <a href="#">帮助(<u>H</u>)</a><a href="#">ET2008</a>
            <span class="mdi">
                <button title="最小化"><svg viewBox="0 0 14 14"><path d="M3 10h7v2H3z" fill="#666"/></svg></button>
                <button title="还原"><svg viewBox="0 0 14 14"><path d="M5 2h7v6H5zM2 6h7v6H2z" fill="#eee" stroke="#666" stroke-width="1.500"/></svg></button>
                <button title="关闭"><svg viewBox="0 0 14 14"><path d="M3 3l8 8M11 3l-8 8" stroke="#666" stroke-width="2.500"/></svg></button>
            </span>
        </nav>

        <div class="bar bar-standard">
            <i class="grip"></i>
            <button class="b wide"><svg><use href="#nx"/></svg>开始</button><i class="arr"></i>
            <button class="b" title="新建"><svg><use href="#new"/></svg></button>
            <button class="b" title="打开"><svg><use href="#open"/></svg></button>
            <button class="b" title="保存"><svg><use href="#save"/></svg></button><i class="sep"></i>
            <button class="b" title="删除"><svg><use href="#del"/></svg></button><i class="sep"></i>
            <button class="b" title="撤消"><svg><use href="#undo"/></svg></button>
            <button class="b" title="重做"><svg><use href="#redo"/></svg></button><i class="sep"></i>
            <button class="b wide finder"><svg><use href="#binoc"/></svg>命令查找器</button>
            <button class="b" title="图层"><svg><use href="#list"/></svg></button><i class="arr"></i><i class="sep"></i>
            <button class="b" title="移动"><svg><use href="#swap"/></svg></button>
            <button class="b" title="布局"><svg><use href="#boxes"/></svg></button><i class="more"></i>
            <i class="grip"></i>
            <button class="b" title="适合窗口"><svg><use href="#fit"/></svg></button><i class="arr"></i>
            <button class="b" title="着色"><svg><use href="#bracket"/></svg></button><i class="arr"></i>
            <button class="b" title="定向视图"><svg><use href="#cube"/></svg></button><i class="arr"></i>
            <button class="b" title="截面"><svg><use href="#redcube"/></svg></button>
            <button class="b" title="背景"><svg><use href="#rect"/></svg></button><i class="arr"></i><i class="sep"></i>
            <button class="b" title="编辑截面"><svg><use href="#door2"/></svg></button>
            <button class="b" title="剪切截面"><svg><use href="#door"/></svg></button><i class="more"></i>
            <i class="grip"></i>
            <button class="b" title="图层设置"><svg><use href="#list"/></svg></button>
            <button class="b" title="坐标系"><svg><use href="#axes"/></svg></button><i class="arr"></i><i class="sep"></i>
            <button class="b" title="显示"><svg><use href="#hand"/></svg></button>
            <button class="b" title="编辑显示"><svg><use href="#palette"/></svg></button><i class="sep"></i>
            <button class="b" title="隐藏"><svg><use href="#cmp"/></svg></button><i class="arr"></i>
            <button class="b" title="反向隐藏"><svg><use href="#cmp2"/></svg></button>
            <button class="b" title="全部显示"><svg><use href="#cmp3"/></svg></button><i class="sep"></i>
            <button class="b" title="测量距离"><svg><use href="#ruler"/></svg></button>
            <button class="b" title="测量角度"><svg><use href="#angle"/></svg></button><i class="more"></i>
            <i class="grip"></i>
            <button class="b"><span class="tile m3">M3</span></button><i class="arr"></i><i class="more"></i>
            <i class="grip"></i>
            <button class="b"><span class="tile key">KEY</span></button>
            <button class="b" title="螺钉"><svg><use href="#screw"/></svg></button>
            <button class="b" title="等高"><svg><use href="#screw2"/></svg></button>
            <button class="b" title="弹簧"><svg><use href="#spring"/></svg></button>
            <button class="b" title="销钉"><svg><use href="#pin"/></svg></button>
            <button class="b"><span class="tile two red">销钉底孔</span></button>
            <button class="b"><span class="tile two cyan">吊模块</span></button>
            <button class="b" title="块"><svg><use href="#gblock"/></svg></button>
            <button class="b" title="条"><svg><use href="#strip"/></svg></button><i class="more"></i><i class="sep"></i>
        </div>

        <div class="bar">
            <i class="grip"></i>
            <button class="b" title="基准平面"><svg><use href="#plane"/></svg></button><i class="arr"></i><i class="sep"></i>
            <button class="b" title="阵列"><svg><use href="#bumps"/></svg></button>
            <button class="b" title="求和"><svg><use href="#unite"/></svg></button><i class="arr"></i>
            <button class="b" title="拆分"><svg><use href="#block"/></svg></button>
            <button class="b" title="修剪体"><svg><use href="#slab"/></svg></button>
            <button class="b" title="拉伸"><svg><use href="#extr"/></svg></button><i class="sep"></i>
            <button class="b" title="曲面"><svg><use href="#sheet"/></svg></button>
            <button class="b" title="偏置"><svg><use href="#pyramid"/></svg></button>
            <button class="b" title="多面体"><svg><use href="#gem"/></svg></button><i class="more"></i>
            <i class="grip"></i>
            <button class="b" title="移动面"><svg><use href="#pcube"/></svg></button>
            <button class="b" title="复制面"><svg><use href="#pcube2"/></svg></button>
            <button class="b" title="替换面"><svg><use href="#pcube"/></svg></button>
            <i class="under"></i>
            <button class="b" title="直线"><svg><use href="#line"/></svg></button><i class="sep"></i>
            <button class="b" title="偏置曲线"><svg><use href="#offset"/></svg></button>
            <button class="b" title="面上偏置"><svg><use href="#surf"/></svg></button>
            <button class="b" title="桥接"><svg><use href="#bridge"/></svg></button>
            <button class="b" title="连结"><svg><use href="#bridge"/></svg></button>
            <button class="b" title="简化"><svg><use href="#bridge"/></svg></button>
            <button class="b" title="投影曲线"><svg><use href="#proj"/></svg></button>
            <button class="b" title="相交曲线"><svg><use href="#isect"/></svg></button>
            <button class="b" title="缠绕"><svg><use href="#cyl"/></svg></button><i class="more"></i>
            <i class="grip"></i>
            <button class="b" title="编辑参数"><svg><use href="#note"/></svg></button>
            <button class="b" title="样条"><svg><use href="#spline"/></svg></button>
            <button class="b" title="修剪曲线"><svg><use href="#trim"/></svg></button>
            <button class="b" title="修剪拐角"><svg><use href="#trimx"/></svg></button>
            <button class="b" title="分割曲线"><svg><use href="#scurve"/></svg></button>
            <button class="b" title="编辑圆角"><svg><use href="#fillet"/></svg></button>
            <button class="b" title="拉长曲线"><svg><use href="#poly"/></svg></button>
            <button class="b" title="曲线长度"><svg><use href="#arc"/></svg></button><i class="more"></i>
            <i class="grip"></i>
            <button class="b" title="螺栓"><svg><use href="#gbolt"/></svg></button>
            <button class="b" title="COPY"><svg><use href="#copy"/></svg></button>
            <button class="b" title="中心"><svg><use href="#target"/></svg></button>
            <button class="b" title="圆柱"><svg><use href="#gcyl"/></svg></button>
            <button class="b" title="文件夹"><svg><use href="#folder"/></svg></button><i class="more"></i><i class="sep"></i>
        </div>

        <div class="bar bar-last">
            <i class="grip"></i>
            <button class="b" title="红盒"><svg><use href="#redbox"/></svg></button>
            <button class="b" title="黄盒"><svg><use href="#ybox"/></svg></button>
            <button class="b" title="夹具"><svg><use href="#jig"/></svg></button>
            <button class="b"><span class="tile small edge">干涉</span></button>
            <button class="b"><span class="tile two edge">更新显示</span></button>
            <button class="b"><span class="tile big">弹</span></button>
            <button class="b" title="中心"><svg><use href="#target"/></svg></button>
            <button class="b" title="COPY"><svg><use href="#copy"/></svg></button><i class="more"></i>
            <i class="grip"></i>
            <button class="b"><span class="tile lilac">替换</span></button>
            <button class="b" title="渲染"><svg><use href="#ball"/></svg></button>
            <button class="b" title="材质"><svg><use href="#ball2"/></svg></button>
            <button class="b"><span class="tile restore">还原</span></button>
            <button class="b"><span class="tile two yellow">注解颜色</span></button>
            <i class="under under-color"></i>
            <button class="b" title="中心"><svg><use href="#target"/></svg></button>
            <button class="b" title="分析面"><svg><use href="#rainbow"/></svg></button>
            <button class="b" title="标识"><svg><use href="#sign"/></svg></button><i class="more"></i>
            <i class="grip"></i>
            <button class="b" title="火"><svg><use href="#fire"/></svg></button>
            <button class="b" title="标识"><svg><use href="#sign"/></svg></button>
            <button class="b"><span class="tile lilac">实透</span></button>
            <button class="b"><span class="tile lilac">面透</span></button>
            <button class="b"><span class="tile restore">还原</span></button>
            <button class="b"><span class="tile lilac">替换</span></button>
            <button class="b keep">保留色</button>
            <button class="b" title="照片"><svg><use href="#photo"/></svg></button>
            <button class="b"><span class="tile teal">截屏</span></button>
            <button class="b"><span class="tile two orange pale">中文图层</span></button>
            <button class="b"><span class="tile three orange">隐藏线变虚线</span></button><i class="more"></i>
            <i class="grip"></i>
            <button class="b" title="拳"><svg><use href="#fist"/></svg></button>
            <button class="b" title="清单"><svg><use href="#doc"/></svg></button>
            <button class="b" title="手册"><svg><use href="#book"/></svg></button><i class="more"></i><i class="sep"></i>
        </div>

        <div class="bar selection">
            <select class="combo filter" aria-label="选择过滤器"><option>没有选择过滤器</option></select>
            <select class="combo scope" aria-label="选择范围"><option>整个装配</option></select>
            <button class="b" title="过滤"><svg><use href="#pencils"/></svg></button><i class="sep"></i>
            <button class="b" title="捕捉"><svg><use href="#star"/></svg></button><i class="arr"></i>
            <button class="b" title="返回"><svg><use href="#back"/></svg></button>
            <button class="b" title="高亮"><svg><use href="#house"/></svg></button>
            <button class="b" title="旋转"><svg><use href="#rot"/></svg></button>
            <button class="b" title="锤"><svg><use href="#hammer"/></svg></button><i class="sep"></i>
            <button class="b" title="框选"><svg><use href="#dash"/></svg></button>
            <i class="under under-snap"></i>
            <button class="b" title="立方"><svg><use href="#cube"/></svg></button>
            <button class="b" title="平面"><svg><use href="#sheet2"/></svg></button>
            <button class="b" title="工具"><svg><use href="#tools"/></svg></button>
            <button class="b" title="拐角"><svg><use href="#corner"/></svg></button>
            <button class="b" title="块"><svg><use href="#cube"/></svg></button>
            <a href="#">设计特征(<u>E</u>)</a><i class="arr"></i>
            <a href="#">同步建模(<u>T</u>)</a><i class="arr"></i>
            <a href="#">细节特征(<u>L</u>)</a><i class="arr"></i>
            <a href="#">网格曲面(<u>M</u>)</a><i class="arr"></i>
            <a href="#">修剪(<u>T</u>)</a><i class="arr"></i>
            <a href="#">组合(<u>B</u>)</a><i class="arr"></i>
            <a href="#">检查几何体(<u>X</u>)...</a>
            <i class="more last"></i>
        </div>

        <div class="prompt">
            <strong>选择对象以高亮显示图层，对图层执行 MB3 以将对象移动或复制到图层</strong>
            <span class="status"></span>
            <span class="status-icons">
                <svg><use href="#flag"/></svg>
                <svg viewBox="0 0 24 24"><path d="M1 7V1h6M17 1h6v6M23 17v6h-6M7 23H1v-6" fill="none" stroke="#555" stroke-width="2"/><path d="M5 6h14v12H5z" fill="#9cc4f5" stroke="#35609c" stroke-width="2"/></svg>
            </span>
        </div>

        <main class="workspace">
            <aside class="resources">
                <button title="装配导航器"><svg><use href="#asm"/></svg></button>
                <button title="约束导航器"><svg><use href="#mirror"/></svg></button>
                <button title="部件导航器"><svg><use href="#part"/></svg></button>
                <button class="group-end" title="重用库"><svg><use href="#books"/></svg></button>
                <button class="group-end" title="HD3D"><svg><use href="#info"/></svg></button>
                <button class="group-end" title="浏览器"><svg><use href="#web"/></svg></button>
                <button title="历史记录"><svg><use href="#clock"/></svg></button>
                <button title="系统材料"><svg><use href="#pal"/></svg></button>
                <button title="加工向导"><svg><use href="#spectrum"/></svg></button>
                <button title="过程"><svg><use href="#process"/></svg></button>
                <button class="active" title="角色"><svg><use href="#people"/></svg></button>
                <button title="系统场景"><svg><use href="#role"/></svg></button>
                <button title="冲模"><svg><use href="#press"/></svg></button>
            </aside>

            <section class="viewport">
                <svg class="datum" viewBox="0 0 60 160">
                    <text x="10" y="10" font-size="12" fill="#6a6ae0" font-family="Liberation Sans">Z</text>
                    <path d="M14 28v122M14 80h46M14 150h46" stroke="#6a68e0" fill="none"/>
                    <path d="M14 13l4 15h-8z" fill="#1414d8"/><circle cx="14" cy="150" r="3" fill="#1414d8"/>
                </svg>
                <svg class="triad" viewBox="0 0 66 66">
                    <path d="M12 30h26v25H12z" fill="#d3d5d6" stroke="#aeb0b2"/>
                    <path d="M11 14v40" stroke="#1c49d8" stroke-width="3"/><path d="M11 11l4 11H7z" fill="#1c49d8"/>
                    <path d="M16 55h30" stroke="#d23a30" stroke-width="3"/><path d="M56 55l-12-4v8z" fill="#d23a30"/>
                    <circle cx="11" cy="55" r="4" fill="#8fb09a" stroke="#567"/>
                    <text x="7" y="10" font-size="12" fill="#3a68e8" font-family="Liberation Sans">Z</text>
                    <text x="57" y="60" font-size="11" fill="#e04a40" font-family="Liberation Sans">X</text>
                </svg>
                <svg class="model" viewBox="40 40 400 345">
                    <g stroke="#222" stroke-width="2">
                        <path d="M0 48h367v32H0zM335 118h33v240h-33zM0 355h403v22H0zM0 260h72v95H0zM175 260h26v95h-26z" fill="#646464"/>
                        <path d="M190 118h90v38h-90zM288 122h45v72h-45zM207 262h55v24h-55zM262 262h75v16h-75z" fill="#575757"/>
                        <path d="M201 286h140v68H201z" fill="#1b1b1b"/>
                        <path d="M72 298h100v55H72z" fill="#cfcfd3"/>
                        <path d="M74 260h94v38H74z" fill="#b5b2e6"/>
                        <path d="M0 80h308v37H0zM0 215h367v46H0z" fill="#a9645e"/>
                        <path d="M162 118h10v30h-10zM197 154h72v14h-72z" fill="#e8301c"/>
                        <path d="M0 119h162v22H0zM64 150h130v20H64zM273 194h60v10h-60z" fill="#18809c"/>
                        <path d="M145 172h38v40h-38z" fill="#7a8a30"/>
                        <path d="M150 175h22v8h-4v12h-5v-12h-4v10h-6z" fill="#fff"/>
                        <path d="M82 144h46v34l14 36H62l20-36z" fill="#fb1cf0" stroke="#a010a0"/>
                        <path d="M185 178h30v36h-30z" fill="#ffe81c"/>
                        <path d="M220 168h32v45h-32z" fill="#dcdcec"/>
                        <path d="M307 80h62v30h-62zM369 88h18v14h-18zM386 70h12v45h-12zM314 110h42v10h-42z" fill="#6f66e8"/>
                        <path d="M190 50h32v27h-32zM110 346h32v30h-32z" fill="#63609c"/>
                        <path d="M368 160h26v84h-26zM392 172h43v14h-43zM406 186h12l-6 20z" fill="#1a819e"/>
                        <path d="M370 240l60 24-8 24-54-24z" fill="#666"/>
                        <path d="M340 316h52l6 8v28l-6 8h-52l-8-8v-28z" fill="#7b74ea"/>
                        <path d="M92 346h66v10H92zM95 70h62v8H95z" fill="#777"/>
                    </g>
                    <g fill="none" stroke="#3a1a18" stroke-width="3"><circle cx="125" cy="97" r="8"/><circle cx="280" cy="238" r="8"/><circle cx="293" cy="66" r="5"/><circle cx="246" cy="366" r="5"/></g>
                </svg>

                <div class="layer-tools">
                    <div class="lt-title"><span>图层工具</span><i class="arr"></i><button title="关闭">✖</button></div>
                    <div class="lt-body">
                        <button class="b"><span class="tile two gray">模具图层</span></button>
                        <button class="b"><span class="tile two gray">开上模</span></button><i class="arr"></i>
                        <button class="b"><span class="tile two gray">开上台面</span></button><i class="arr"></i>
                        <button class="b"><span class="tile serif">T</span></button>
                        <i class="under under-layers"></i>
                        <button class="b"><span class="tile serif">C</span></button><i class="arr"></i>
                        <button class="b"><span class="tile serif">LB</span></button><i class="arr"></i>
                        <button class="b"><span class="tile serif">LP</span></button><i class="arr"></i>
                        <button class="b"><span class="tile serif">B2</span></button><i class="arr"></i>
                        <button class="b"><span class="tile serif">B1</span></button><i class="arr"></i>
                        <button class="b"><span class="tile two gray">开上TOOL</span></button><i class="arr"></i>
                        <button class="b"><span class="tile two gray">ALL 开</span></button><i class="arr"></i>
                    </div>
                </div>
            </section>
        </main>

        <div class="bar bottom">
            <i class="grip"></i>
            <button class="b" title="草图"><svg><use href="#sketch"/></svg></button>
            <button class="b wide done" disabled><svg><use href="#flag"/></svg>完成草图</button>
            <button class="b" title="轮廓"><svg><use href="#profile"/></svg></button>
            <button class="b" title="直线"><svg><use href="#line"/></svg></button>
            <button class="b" title="圆弧"><svg><use href="#arc3"/></svg></button>
            <button class="b" title="圆"><svg><use href="#circle"/></svg></button>
            <button class="b" title="圆角"><svg><use href="#gfillet"/></svg></button>
            <button class="b" title="倒斜角"><svg><use href="#chamfer"/></svg></button>
            <button class="b" title="矩形"><svg><use href="#rect2"/></svg></button>
            <button class="b" title="艺术样条"><svg><use href="#spline"/></svg></button>
            <button class="b" title="点"><svg><use href="#plus"/></svg></button>
            <button class="b" title="偏置曲线"><svg><use href="#goff"/></svg></button><i class="arr"></i><i class="sep"></i>
            <button class="b" title="快速修剪"><svg><use href="#gcurve"/></svg></button>
            <button class="b" title="快速延伸"><svg><use href="#gcurve"/></svg></button>
            <button class="b" title="制作拐角"><svg><use href="#gfillet"/></svg></button><i class="sep"></i>
            <button class="b" title="镜像"><svg><use href="#gcurve"/></svg></button><i class="arr"></i><i class="sep"></i>
            <button class="b" title="尺寸"><svg><use href="#gperp"/></svg></button>
            <button class="b" title="约束"><svg><use href="#gdim"/></svg></button>
            <button class="b" title="自动约束"><svg><use href="#gperp"/></svg></button><i class="arr"></i><i class="sep"></i>
            <button class="b" title="显示约束"><svg><use href="#gdim"/></svg></button>
            <button class="b" title="备选解"><svg><use href="#gbox"/></svg></button>
            <button class="b" title="参考"><svg><use href="#gbox"/></svg></button><i class="more"></i>
            <i class="grip"></i>
            <button class="b" title="查找组件"><svg><use href="#yfind"/></svg></button><i class="arr"></i>
            <button class="b" title="关联"><svg><use href="#wave"/></svg></button>
            <button class="b" title="添加组件"><svg><use href="#yadd"/></svg></button><i class="arr"></i>
            <button class="b" title="移动组件"><svg><use href="#ymove"/></svg></button>
            <button class="b" title="镜像装配"><svg><use href="#mirror"/></svg></button>
            <button class="b" title="装配约束"><svg><use href="#constr"/></svg></button><i class="sep"></i>
            <button class="b" title="编辑"><svg><use href="#wrench"/></svg></button>
            <button class="b" title="阵列"><svg><use href="#y3"/></svg></button>
            <button class="b" title="替换"><svg><use href="#repl"/></svg></button><i class="sep"></i>
            <button class="b" title="引用集"><svg><use href="#hexd"/></svg></button><i class="sep"></i>
            <button class="b" title="链接"><svg><use href="#chain"/></svg></button>
            <button class="b" title="部件间链接"><svg><use href="#chain2"/></svg></button>
            <button class="b" title="关系"><svg><use href="#tree"/></svg></button><i class="sep"></i>
            <button class="b" title="序列"><svg><use href="#seq"/></svg></button><i class="arr"></i><i class="more"></i><i class="sep"></i>
        </div>
    </div>

    <!-- Layer settings window -->
    <form class="dialog">
        <div class="dialog-title">
            <span>图层设置</span>
            <button type="button" title="重置"><svg viewBox="0 0 18 18"><path d="M10 4q6 3 2 8-4 3-8-1" fill="none" stroke="#fff" stroke-width="2.600"/></svg></button>
            <button type="button" title="选项"><svg viewBox="0 0 18 18"><circle cx="9" cy="9" r="4.500" fill="none" stroke="#fff" stroke-width="2"/><path d="M9 2v3M9 13v3M2 9h3M13 9h3M4 4l2 2M12 12l2 2M14 4l-2 2M4 14l2-2" stroke="#fff" stroke-width="1.800"/><circle cx="9" cy="9" r="1.500" fill="#fff"/></svg></button>
            <button type="button" class="win-close" title="关闭"><svg viewBox="0 0 18 18"><path d="M4 4l10 10M14 4L4 14" stroke="#fff" stroke-width="2.200"/></svg></button>
        </div>
        <div class="dialog-body">
            <h3 class="head">查找以下对象所在的图层<i class="fold"></i></h3>
            <div class="panel pick">
                <label for="pick-btn">选择对象 (0)</label>
                <button type="button" class="tool hot" id="pick-btn" title="选择对象"><svg viewBox="0 0 24 24"><circle cx="12" cy="12" r="6" fill="none" stroke="#c03a10" stroke-width="1.500"/><path d="M12 1v22M1 12h22" stroke="#8a2a08" stroke-width="1.500"/></svg></button>
            </div>

            <h3 class="head">工作图层<i class="fold"></i></h3>
            <div class="panel work">
                <label for="work-layer">工作图层</label>
                <span class="field"><input id="work-layer" class="marked" type="text" value="1"></span>
            </div>

            <h3 class="head">图层<i class="fold"></i></h3>
            <div class="panel layers">
                <div class="row"><label for="range">按范围/类别选择图层</label><span class="field"><input id="range" type="text"></span></div>
                <div class="row check"><input id="by-cat" type="checkbox" checked><label for="by-cat">类别显示</label></div>
                <div class="row"><label for="cat-filter">类别过滤器</label><select id="cat-filter" class="combo list-combo"><option>*</option></select></div>

                <div class="grid">
                    <div class="grid-view">
                        <table>
                            <thead><tr><th>名称 <i class="asc"></i></th><th>仅可见</th><th>对象数</th></tr></thead>
                            <tbody>
                                <tr><td><i class="node"></i><input type="checkbox" aria-label="04-UP" checked>04-UP</td><td><input type="checkbox" aria-label="仅可见 04"></td><td>1</td></tr>
                                <tr><td><i class="node"></i><input type="checkbox" aria-label="05-UB" checked>05-UB</td><td><input type="checkbox" aria-label="仅可见 05"></td><td>67</td></tr>
                                <tr><td><i class="node leaf"></i><input type="checkbox" aria-label="06-UB_P" checked>06-UB_P</td><td><input type="checkbox" aria-label="仅可见 06"></td><td></td></tr>
                                <tr><td><i class="node"></i><input type="checkbox" aria-label="07-PH" checked>07-PH</td><td><input type="checkbox" aria-label="仅可见 07"></td><td>9</td></tr>
                                <tr><td><i class="node"></i><input type="checkbox" aria-label="08-PH_P" checked>08-PH_P</td><td><input type="checkbox" aria-label="仅可见 08"></td><td>32</td></tr>
                                <tr><td><i class="node"></i><input type="checkbox" aria-label="09-PUNCH" checked>09-PUNCH</td><td><input type="checkbox" aria-label="仅可见 09"></td><td>27</td></tr>
                                <tr><td><i class="node"></i><input type="checkbox" aria-label="10-UP" checked>10-UP ...</td><td><input type="checkbox" aria-label="仅可见 10"></td><td>145</td></tr>
                                <tr><td><i class="node"></i><input type="checkbox" aria-label="11-PS" checked>11-PS</td><td><input type="checkbox" aria-label="仅可见 11"></td><td>2</td></tr>
                                <tr><td><i class="node"></i><input type="checkbox" aria-label="12-PS_P" checked>12-PS_P</td><td><input type="checkbox" aria-label="仅可见 12"></td><td>78</td></tr>
                                <tr><td><i class="node"></i><input type="checkbox" aria-label="13-GUIDE" checked>13-GUIDE</td><td><input type="checkbox" aria-label="仅可见 13"></td><td>20</td></tr>
                                <tr><td><i class="node"></i><input type="checkbox" aria-label="14-DIE" checked>14-DIE</td><td><input type="checkbox" aria-label="仅可见 14"></td><td>39</td></tr>
                                <tr><td><i class="node"></i><input type="checkbox" aria-label="15-DIE_P" checked>15-DIE_P</td><td><input type="checkbox" aria-label="仅可见 15"></td><td>43</td></tr>
                                <tr><td><i class="node"></i><input type="checkbox" aria-label="16-LB" checked>16-LB</td><td><input type="checkbox" aria-label="仅可见 16"></td><td>51</td></tr>
                            </tbody>
                        </table>
                    </div>
                    <div class="vscroll"><i class="corner"></i><i class="tri up"></i><i class="thumb"></i><i class="tri down"></i></div>
                    <div class="hscroll"><i class="tri left"></i><i class="thumb"></i><i class="tri right"></i></div>
                </div>

                <div class="row show-row"><label for="show">显示</label><select id="show" class="combo list-combo"><option>含有对象的图层</option></select></div>
                <div class="row add-row"><label for="add-cat">添加类别</label><button type="button" class="tool" id="add-cat" title="添加类别"><svg><use href="#stack-add"/></svg></button></div>

                <fieldset class="control">
                    <h4>图层控制<i class="fold"></i></h4>
                    <div class="row off"><label for="c1">设为可选</label><button type="button" class="tool" id="c1" disabled><svg><use href="#stack-tan"/></svg></button></div>
                    <div class="row off"><label for="c2">设为工作图层</label><button type="button" class="tool" id="c2" disabled><svg><use href="#stack-pts"/></svg></button></div>
                    <div class="row off"><label for="c3">设为仅可见</label><button type="button" class="tool" id="c3" disabled><svg><use href="#stack"/></svg></button></div>
                    <div class="row off"><label for="c4">设为不可见</label><button type="button" class="tool" id="c4" disabled><svg><use href="#stack"/></svg></button></div>
                    <div class="row"><label for="c5">信息</label><button type="button" class="tool" id="c5"><svg viewBox="0 0 24 24"><path d="M2 2h20v20H2z" fill="#fff" stroke="#5a58b8" stroke-width="2"/><circle cx="12" cy="6.500" r="2.500" fill="#14147a"/><path d="M8 10h6v7h2v2H8v-2h2v-5H8z" fill="#14147a"/></svg></button></div>
                </fieldset>
            </div>

            <h3 class="head">设置<i class="fold"></i></h3>
            <div class="panel settings">
                <div class="row check"><input id="fit-all" type="checkbox"><label for="fit-all">显示前全部适合</label></div>
                <div class="row check off"><input id="move-to" type="checkbox" disabled><label for="move-to">将“移至图层”应用于属主部件</label></div>
            </div>
            <div class="foot"><button type="button" class="close">关闭</button></div>
        </div>
        <i class="halo"></i>
        <svg class="cursor" viewBox="0 0 14 22"><path d="M1 1v16l4-4 3 7 3-1-3-7h5z" fill="#fff" stroke="#222"/></svg>
    </form>
</body>
</html>
```
FILE: styles.css
```css
* {
    box-sizing: border-box;
}

body {
    margin: 0;
    background: #000;
    color: #222;
    font-family: "Noto Sans CJK SC", sans-serif;
    font-size: 12px;
    line-height: 16px;
    /* half-width latin, as in the system UI font */
    font-feature-settings: "hwid";
    overflow: hidden;
}

button, input, select {
    font: inherit;
    font-feature-settings: inherit;
    color: inherit;
    margin: 0;
}

button {
    border: 0;
    padding: 0;
    background: none;
}

a {
    color: inherit;
    text-decoration: none;
}

svg {
    display: block;
}

.library {
    position: absolute;
    width: 0;
    height: 0;
}

.app {
    position: relative;
    display: flex;
    flex-direction: column;
    height: 100vh;
    margin: 0 154px;
    border-top: 6px solid #1070e8;
    border-left: 4px solid #1a1a1a;
    border-right: 2px solid #1070e8;
    border-bottom: 8px solid #1c1c1e;
    background: #d8d8d8;
}

/* title bar */
.titlebar {
    display: flex;
    align-items: flex-start;
    gap: 4px;
    height: 25px;
    padding-left: 142px;
    background: linear-gradient(#666, #1c1c1c 5px, #1c1c1c);
    color: #ddd;
}

.doc-title {
    font-size: 13px;
    font-feature-settings: normal;
}

.brand {
    margin-left: auto;
    margin-right: 24px;
    color: #fff;
    font: 900 13px/16px Inter, sans-serif;
}

.win svg,
.dialog-title svg {
    width: 18px;
    height: 18px;
    border-radius: 3px;
    background: linear-gradient(#777, #3a3a3a);
}

.win-close svg {
    background: linear-gradient(#f58a6a, #e0452a);
}

.caption {
    position: absolute;
    left: -4px;
    top: 0;
    z-index: 2;
    width: 146px;
    height: 34px;
    background: #efefef;
    border: solid #999;
    border-width: 0 2px 2px 0;
    color: #111;
    font: bold 16px/34px "Liberation Mono", "Noto Sans CJK SC", monospace;
}

/* menu */
.menubar {
    display: flex;
    flex: none;
    align-items: center;
    gap: 15px;
    height: 24px;
    padding-left: 4px;
    background: #e4e4e4;
    white-space: nowrap;
}

.menubar .sep {
    height: 20px;
    margin: 0 -8px 0 -8px;
}

.menu-logo {
    width: 16px;
    height: 16px;
    margin: 0 -8px 0 -12px;
}

.dots {
    width: 2px;
    height: 14px;
    border-left: 2px dotted #aaa;
}

.mdi {
    display: flex;
    gap: 4px;
    margin-left: auto;
    margin-right: 5px;
}

.mdi svg {
    width: 16px;
    height: 16px;
    border: 1px solid #777;
    border-radius: 3px;
    background: #eee;
}

/* toolbars */
.bar {
    display: flex;
    flex: none;
    align-items: center;
    height: 36px;
    background: linear-gradient(#e2e2e2, #cdcdcd);
    border-top: 1px solid #f2f2f2;
    border-bottom: 1px solid #c2c2c2;
    white-space: nowrap;
    overflow: hidden;
}

.bar-standard {
    padding-left: 8px;
}

.bar-last {
    border-bottom: 2px solid #999;
}

.b {
    display: flex;
    flex: none;
    align-items: center;
    justify-content: center;
    width: 32px;
    height: 32px;
}

.b svg {
    flex: none;
    width: 24px;
    height: 24px;
}

.b.wide {
    width: auto;
    padding-left: 4px;
    gap: 5px;
}

.b.finder {
    padding-right: 6px;
}

.b.done {
    padding-right: 5px;
    color: #999;
}

.b.keep {
    width: 44px;
}

.grip {
    flex: none;
    width: 10px;
    height: 26px;
    background: radial-gradient(circle, #999 1px, transparent 1px) center / 4px 4px repeat-y;
}

.grip:first-child {
    width: 8px;
}

.sep {
    flex: none;
    width: 7px;
    height: 32px;
    background: linear-gradient(90deg, transparent 3px, #bbb 3px, #bbb 4px, #f5f5f5 4px, #f5f5f5 5px, transparent 5px);
}

.arr, .more {
    position: relative;
    flex: none;
    width: 13px;
    height: 6px;
    background: conic-gradient(from -45deg at 50% 80%, #222 90deg, transparent 0) center / 6px 5px no-repeat;
}

.bar-standard .arr {
    width: 12px;
}

.more {
    align-self: flex-end;
    margin-bottom: 5px;
}

/* spans of a toolbar that lie beneath the dialog */
.under {
    flex: 0 0 361px;
}

.under-color {
    flex-basis: 370px;
}

.under-snap {
    flex-basis: 359px;
}

.under-layers {
    flex-basis: 324px;
}

/* text tiles */
.tile {
    display: flex;
    flex-wrap: wrap;
    align-content: center;
    justify-content: center;
    width: 24px;
    height: 24px;
    background: #fff;
    color: #111;
    font-size: 11px;
    line-height: 11px;
    white-space: normal;
    word-break: break-all;
}

.tile.small {
    font-size: 9px;
}

.tile.two {
    font-size: 9px;
    line-height: 10px;
    padding: 0 2px;
}

.tile.three {
    font-size: 8px;
    line-height: 11px;
}

.tile.big {
    color: #1428e0;
    font-size: 22px;
    line-height: 24px;
    font-weight: 900;
}

.tile.edge {
    border: 1px solid #888;
}

.tile.gray {
    border: 1px solid #999;
    color: #555;
}

.tile.lilac {
    border: 1px solid #a8a8e0;
}

.tile.restore {
    border: 1px solid #8a6a4a;
    background: #d3d3fa;
}

.tile.yellow {
    background: #f5ee90;
    color: #776a10;
}

.tile.red {
    color: #e01c1c;
    font-weight: bold;
}

.tile.cyan {
    border: 1px solid #222;
    background: #1fe5f5;
    font-weight: bold;
}

.tile.teal {
    background: #347f9e;
    color: #0d2038;
    font-weight: bold;
}

.tile.orange {
    background: #f6a31c;
    color: #5a3400;
}

.tile.pale {
    background: #f7a850;
    color: #b07a3a;
}

.tile.m3 {
    border: 1px solid #668;
    background: #b0dbe0;
    font: 12px/12px "Liberation Sans", sans-serif;
}

.tile.key {
    background: linear-gradient(#f01010, #f01010) right bottom / 9px 8px no-repeat, #9a9a9a;
    color: #f01010;
    font: bold 10px/11px "Liberation Sans", sans-serif;
}

.tile.serif {
    width: 26px;
    font: bold 19px/24px "Liberation Serif", serif;
}

/* selection bar */
.selection {
    height: 28px;
    padding: 0 0 2px 5px;
    background: linear-gradient(#cfcfcf, #dcdcdc);
}

.selection .b {
    width: 24px;
    height: 24px;
}

.selection .b svg {
    width: 17px;
    height: 17px;
}

.selection .arr {
    width: 17px;
}

.selection .b + .arr {
    width: 10px;
}

.selection .sep {
    height: 22px;
}

.selection .last {
    margin-left: auto;
    width: 19px;
}

.combo {
    appearance: none;
    height: 18px;
    padding: 0 18px 0 2px;
    border: 1px solid #667;
    border-radius: 3px;
    color: #111;
    line-height: 16px;
    background:
        conic-gradient(from -45deg at 50% 80%, #111 90deg, transparent 0) right 4px center / 10px 7px no-repeat,
        linear-gradient(#d8ecff, #5a9ae0) right / 17px 100% no-repeat,
        #fff;
}

.filter {
    width: 114px;
    margin-right: 9px;
}

.scope {
    width: 120px;
    margin-right: 5px;
}

/* prompt line */
.prompt {
    display: flex;
    flex: none;
    align-items: center;
    height: 22px;
    padding-left: 3px;
    border-bottom: 1px solid #aaa;
    background: #dadada;
    color: #111;
    font-size: 14px;
    white-space: nowrap;
}

.status {
    align-self: stretch;
    width: 58px;
    margin-left: auto;
    border: solid #bbb;
    border-width: 0 1px;
}

.status-icons {
    display: flex;
    gap: 5px;
    padding: 0 5px 0 6px;
}

.status-icons svg {
    width: 16px;
    height: 16px;
}

/* workspace */
.workspace {
    display: flex;
    flex: 1;
    min-height: 0;
}

.resources {
    display: flex;
    flex-direction: column;
    align-items: flex-end;
    gap: 3px;
    width: 44px;
    padding-top: 18px;
    border-right: 10px solid #efefef;
    background: #acacac;
}

.resources button {
    display: flex;
    align-items: center;
    justify-content: center;
    width: 27px;
    height: 41px;
    border: 1px solid #888;
    border-right: 0;
    border-radius: 4px 0 0 4px;
    background: #dcdcdc;
}

.resources svg {
    width: 23px;
    height: 23px;
}

.resources .group-end {
    margin-bottom: 11px;
}

.resources .active {
    width: 29px;
    background: #efefef;
}

.viewport {
    position: relative;
    flex: 1;
    background: linear-gradient(#b6b7b8, #c9cbcc 35%, #e4e6e8 65%, #e7e9ea);
}

.datum {
    position: absolute;
    left: 355px;
    top: 178px;
    width: 60px;
    height: 160px;
}

.triad {
    position: absolute;
    left: 54px;
    top: 700px;
    width: 66px;
    height: 66px;
}

.model {
    position: absolute;
    left: 771px;
    top: 280px;
    width: 133px;
    height: 115px;
}

.layer-tools {
    position: absolute;
    left: 264px;
    top: 0;
    width: 799px;
    border: 1px solid #111;
    border-bottom: 9px solid #1c1c1c;
    border-radius: 6px;
    overflow: hidden;
}

.lt-title {
    display: flex;
    align-items: center;
    height: 21px;
    padding: 0 2px 2px 8px;
    background: linear-gradient(#777, #1c1c1c 8px);
    color: #fff;
    font-size: 14px;
    font-weight: bold;
}

.lt-title .arr {
    margin-left: auto;
    margin-right: 8px;
    background: conic-gradient(from -45deg at 50% 80%, #fff 90deg, transparent 0) center / 8px 6px no-repeat;
}

.lt-title button {
    padding: 0 3px;
    border-left: 1px solid #777;
    color: #fff;
    font-family: "DejaVu Sans", sans-serif;
}

.lt-body {
    display: flex;
    align-items: center;
    height: 36px;
    padding-left: 2px;
    background: linear-gradient(#e8e8e8, #dadada);
}

.bottom {
    background: linear-gradient(#e6e6e6, #d2d2d2);
}

/* dialog */
.dialog {
    position: absolute;
    left: 597px;
    top: 95px;
    z-index: 5;
    width: 377px;
    border-bottom: 8px solid #1c1c1c;
    border-radius: 6px;
    color: #222;
}

.dialog-title {
    display: flex;
    align-items: center;
    gap: 4px;
    height: 25px;
    padding: 0 4px 0 9px;
    border-radius: 6px 6px 0 0;
    background: linear-gradient(#777, #555 10px, #1c1c1c 12px);
    color: #eee;
}

.dialog-title span {
    margin-right: auto;
}

.dialog-body {
    padding: 3px 6px 0;
    background: #ececec;
    border: solid #aaa;
    border-width: 0 1px;
}

.head {
    display: flex;
    align-items: center;
    justify-content: space-between;
    height: 24px;
    margin: 0;
    padding-left: 5px;
    background: linear-gradient(#fafafa, #f0f0f0 50%, #dcdcdc);
    color: #222;
    font-size: 13px;
    font-weight: bold;
}

.fold {
    width: 23px;
    height: 22px;
    border-left: 1px solid #ccc;
    background: url("data:image/svg+xml,%3Csvg xmlns='http://www.w3.org/2000/svg' viewBox='0 0 12 10'%3E%3Cpath d='M2 9l4-7 4 7' fill='none' stroke='%23606060' stroke-width='2.6'/%3E%3C/svg%3E") center / 12px 10px no-repeat;
}

.panel {
    padding: 0 8px;
    background: #d4d4d4;
    border: solid #999;
    border-width: 2px 1px 0 2px;
}

.pick {
    display: flex;
    align-items: center;
    height: 48px;
    padding: 0 8px 3px 6px;
}

.pick label {
    flex: 1;
    height: 32px;
    padding-top: 8px;
    border-radius: 5px;
    background: linear-gradient(90deg, #e5aa6c, #e5b078 30%, #d4d4d4 92%);
}

.work {
    display: flex;
    align-items: center;
    justify-content: space-between;
    height: 35px;
    padding: 0 8px 4px 6px;
}

.field {
    display: flex;
    width: 58px;
    height: 17px;
    padding: 1px 3px;
    border: 1px solid #667;
    border-radius: 4px;
    background: #fff;
}

.field input {
    width: 100%;
    padding: 0 2px;
    border: 0;
    background: none;
    font-size: 11px;
    line-height: 13px;
    text-align: right;
}

.field .marked {
    background: #2c8df5;
    color: #fff;
}

.tool {
    display: flex;
    flex: none;
    align-items: center;
    justify-content: center;
    width: 32px;
    height: 32px;
    border: 2px solid #888;
    border-radius: 4px;
    background: linear-gradient(#fff, #ddd);
}

.tool svg {
    width: 24px;
    height: 24px;
}

.tool:disabled {
    border-color: #d8d8d8;
    background: #ececec;
}

.tool.hot {
    border-color: #a86a48;
    background: linear-gradient(#fde2c8, #f58a4a);
}

.row {
    display: flex;
    align-items: center;
    justify-content: space-between;
}

.layers {
    padding: 3px 8px 10px 6px;
}

.layers > .row {
    height: 22px;
}

.check {
    justify-content: flex-start;
    gap: 2px;
}

.check input {
    appearance: none;
    width: 16px;
    height: 16px;
    border: 1px solid #777;
    border-radius: 2px;
    background: linear-gradient(#eee, #ccc 50%, #f0f0f0);
}

.check input:checked {
    border-color: #357;
    background: url("data:image/svg+xml,%3Csvg xmlns='http://www.w3.org/2000/svg' viewBox='0 0 14 14'%3E%3Cpath d='M3 6l3 4 6-7' fill='none' stroke='%230c2a66' stroke-width='2.5'/%3E%3C/svg%3E"), linear-gradient(#bfe3ff, #4aa5ea);
}

.check input:disabled {
    border-color: #ccc;
    background: #e8e8e8;
}

.list-combo {
    width: 110px;
}

/* layer list */
.grid {
    display: grid;
    grid-template-columns: 1fr 17px;
    grid-template-rows: 275px 18px;
    margin-top: 2px;
    border: 1px solid #666;
    background: #fff;
}

.grid-view {
    overflow: hidden;
}

.grid table {
    width: 100%;
    border-collapse: collapse;
    table-layout: fixed;
    color: #444;
}

.grid th {
    height: 17px;
    padding: 0 6px;
    background: linear-gradient(#f8f8f8, #ddd);
    border-right: 1px solid #bbb;
    font-weight: normal;
    text-align: left;
}

.grid th:nth-child(1) {
    width: 101px;
}

.grid th:nth-child(2) {
    width: 88px;
}

.grid th:nth-child(3) {
    border-right: 0;
}

.grid td {
    height: 21px;
    padding: 0 4px;
    border-right: 1px solid #e4e4e4;
    border-bottom: 1px solid #e4e4e4;
    white-space: nowrap;
    overflow: hidden;
}

.grid tr:nth-child(4n) td {
    height: 20px;
}

.grid tr:nth-child(even) td {
    background: #f6f6f6;
}

.grid td:first-child {
    border-right-color: #111;
}

.grid td:nth-child(2) {
    padding-left: 6px;
}

.grid td:last-child {
    border-right: 0;
}

.grid td input {
    appearance: none;
    width: 13px;
    height: 13px;
    border: 1px solid #222;
    background: #fff;
    vertical-align: middle;
}

.grid td:first-child input {
    margin-right: 5px;
}

.grid td input:checked {
    background: url("data:image/svg+xml,%3Csvg xmlns='http://www.w3.org/2000/svg' viewBox='0 0 11 11'%3E%3Cpath d='M1 5l3 4 6-8' fill='none' stroke='%23d82020' stroke-width='2.6'/%3E%3C/svg%3E");
}

.asc {
    display: inline-block;
    margin-left: 12px;
    border: solid transparent;
    border-width: 0 5px 6px;
    border-bottom-color: #222;
    vertical-align: middle;
}

.node {
    display: inline-block;
    width: 9px;
    height: 9px;
    margin-right: 9px;
    border: 1px solid #999;
    border-radius: 2px;
    background:
        linear-gradient(#333, #333) center / 5px 1px no-repeat,
        linear-gradient(#333, #333) center / 1px 5px no-repeat;
    vertical-align: middle;
}

.leaf {
    border: 0;
    background: linear-gradient(90deg, #bbb 50%, transparent 0) 0 4px / 2px 1px repeat-x;
}

.vscroll, .hscroll {
    display: flex;
    align-items: center;
    background: #f2f2f2;
}

.vscroll {
    flex-direction: column;
}

.hscroll {
    grid-column: 1 / -1;
    padding: 0 25px 0 6px;
}

.corner {
    width: 100%;
    height: 17px;
    background: linear-gradient(#f8f8f8, #ddd);
}

.thumb {
    border: 1px solid #999;
    border-radius: 2px;
}

.vscroll .thumb {
    width: 15px;
    height: 90px;
    margin-top: 55px;
    background:
        repeating-linear-gradient(#666 0 1px, transparent 1px 3px) center / 7px 8px no-repeat,
        linear-gradient(90deg, #f8f8f8, #c4c4c4);
}

.hscroll .thumb {
    width: 185px;
    height: 15px;
    margin-left: 9px;
    background:
        repeating-linear-gradient(90deg, #666 0 1px, transparent 1px 3px) center / 8px 7px no-repeat,
        linear-gradient(#f8f8f8, #c4c4c4);
}

.tri {
    border: 4px solid transparent;
}

.up {
    margin-top: 8px;
    border-top: 0;
    border-bottom-color: #222;
}

.down {
    margin-top: auto;
    margin-bottom: 8px;
    border-bottom: 0;
    border-top-color: #222;
}

.left {
    border-left: 0;
    border-right-color: #222;
}

.right {
    margin-left: auto;
    border-right: 0;
    border-left-color: #222;
}

.layers > .show-row {
    height: 26px;
}

.layers > .add-row {
    height: 32px;
}

.control {
    margin: 3px 0 0;
    padding: 0 9px 8px 8px;
    border: 1px solid #888;
    border-right-color: #e4e4e4;
    border-bottom-color: #e4e4e4;
    background: #c4c4c4;
}

.control h4 {
    display: flex;
    align-items: center;
    justify-content: space-between;
    height: 22px;
    margin: 0 -9px 6px 0;
    font-size: 13px;
}

.control .fold {
    border: 0;
}

.control .row {
    height: 35px;
}

.off {
    color: #999;
}

.settings {
    height: 60px;
    padding: 3px 6px;
    border-bottom: 1px solid #aaa;
}

.settings .row {
    height: 23px;
}

.foot {
    display: flex;
    align-items: center;
    justify-content: flex-end;
    height: 36px;
    padding-right: 10px;
}

.close {
    width: 54px;
    height: 19px;
    border: 1px solid #4a7a3a;
    border-radius: 3px;
    background: linear-gradient(#d8f5c8, #7ac85a 60%, #b5f090);
    color: #111;
    line-height: 16px;
}

/* pointer highlight */
.halo {
    position: absolute;
    left: 119px;
    top: 282px;
    width: 60px;
    height: 60px;
    border-radius: 50%;
    background: #ffea00;
    mix-blend-mode: multiply;
    pointer-events: none;
}

.cursor {
    position: absolute;
    left: 148px;
    top: 311px;
    width: 14px;
    height: 22px;
}
```
